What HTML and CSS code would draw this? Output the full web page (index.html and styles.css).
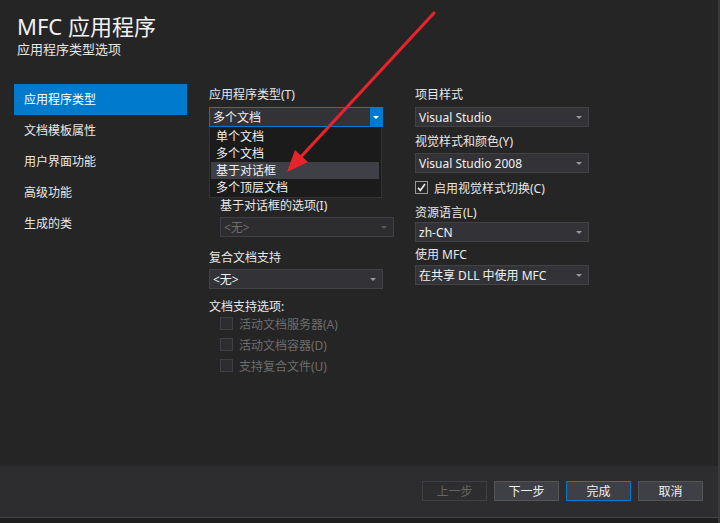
FILE: index.html
```html
<!DOCTYPE html>
<html>
  <head>
    <title>MFC 应用程序</title>
    <link rel="stylesheet" href="styles.css">
  </head>
  <body>
    <div class="dialog">
      <header>
        <h1>MFC 应用程序</h1>
        <div class="subtitle">应用程序类型选项</div>
      </header>

      <main>
        <nav>
          <div class="nav-item active">应用程序类型</div>
          <div class="nav-item">文档模板属性</div>
          <div class="nav-item">用户界面功能</div>
          <div class="nav-item">高级功能</div>
          <div class="nav-item">生成的类</div>
        </nav>

        <section class="col">
          <label>应用程序类型(T)</label>
          <div class="combo-wrap">
            <div class="combo focused">
              <span>多个文档</span>
              <span class="arrow-box"></span>
            </div>
            <!-- open list -->
            <ul class="dropdown">
              <li>单个文档</li>
              <li>多个文档</li>
              <li class="hover">基于对话框</li>
              <li>多个顶层文档</li>
            </ul>
          </div>

          <div class="indent group-dialog">
            <label>基于对话框的选项(I)</label>
            <div class="combo disabled tight"><span>&lt;无&gt;</span><span class="caret"></span></div>
          </div>

          <label class="gap">复合文档支持</label>
          <div class="combo tight"><span>&lt;无&gt;</span><span class="caret"></span></div>

          <label class="gap-md">文档支持选项:</label>
          <div class="checks">
            <div class="check disabled"><span class="box"></span>活动文档服务器(A)</div>
            <div class="check disabled"><span class="box"></span>活动文档容器(D)</div>
            <div class="check disabled"><span class="box"></span>支持复合文件(U)</div>
          </div>
        </section>

        <section class="col">
          <label>项目样式</label>
          <div class="combo"><span>Visual Studio</span><span class="caret"></span></div>

          <label class="gap-sm">视觉样式和颜色(Y)</label>
          <div class="combo tight"><span>Visual Studio 2008</span><span class="caret"></span></div>

          <div class="check toggle">
            <span class="box checked">
              <svg width="11" height="11" viewBox="0 0 11 11"><path d="M2 5.8 L4.3 8.4 L9 2" fill="none" stroke="#f1f1f1" stroke-width="1.6"/></svg>
            </span>启用视觉样式切换(C)
          </div>

          <label class="gap-sm">资源语言(L)</label>
          <div class="combo snug"><span>zh-CN</span><span class="caret"></span></div>

          <label class="gap-xs">使用 MFC</label>
          <div class="combo close"><span>在共享 DLL 中使用 MFC</span><span class="caret"></span></div>
        </section>
      </main>

      <footer>
        <button class="btn" disabled>上一步</button>
        <button class="btn">下一步</button>
        <button class="btn primary">完成</button>
        <button class="btn">取消</button>
      </footer>
      <div class="bottom-line"></div>
    </div>

    <svg class="annotation" width="720" height="523" viewBox="0 0 720 523">
      <line x1="434" y1="13" x2="298" y2="160" stroke="#e8232b" stroke-width="3.2" stroke-linecap="round"/>
      <polygon points="287,172 295,150 308,162" fill="#e8232b"/>
    </svg>
  </body>
</html>
```

FILE: styles.css
```css
body {
  margin: 0;
  width: 720px;
  height: 523px;
  overflow: hidden;
  background-color: #252526;
  color: #f1f1f1;
  font-family: "Segoe UI", "Noto Sans", "Noto Sans CJK SC", sans-serif;
  font-size: 12px;
  position: relative;
}

.dialog {
  height: 523px;
  display: flex;
  flex-direction: column;
  border-right: 2px solid #3a3a3d;
  box-sizing: border-box;
}

header {
  padding: 11px 0 0 17px;
  height: 73px;
  box-sizing: border-box;
}
header h1 {
  margin: 0;
  font-size: 22px;
  font-weight: normal;
  line-height: 30px;
}
.subtitle {
  font-size: 13px;
  line-height: 16px;
  color: #e6e6e6;
}

main {
  flex: 1;
  display: flex;
  padding-top: 11px;
}

nav {
  width: 173px;
  margin-left: 14px;
  margin-right: 22px;
}
.nav-item {
  height: 31px;
  line-height: 31px;
  padding-left: 10px;
  color: #e8e8e8;
}
.nav-item.active {
  background-color: #007acc;
  color: #ffffff;
}

.col {
  width: 174px;
  margin-right: 32px;
  display: flex;
  flex-direction: column;
  padding-top: 3px;
}

label {
  display: block;
  line-height: 16px;
  color: #e8e8e8;
}
label.gap {
  margin-top: 13px;
}
label.gap-md {
  margin-top: 10px;
}
label.gap-sm {
  margin-top: 7px;
}
label.gap-xs {
  margin-top: 5px;
}

.combo {
  margin-top: 4px;
  height: 20px;
  box-sizing: border-box;
  background-color: #333337;
  border: 1px solid #434346;
  display: flex;
  align-items: center;
  justify-content: space-between;
  padding-left: 3px;
  color: #f1f1f1;
}
.combo.tight {
  margin-top: 3px;
}
.combo.close {
  margin-top: 2px;
}
.combo.snug {
  margin-top: 1px;
}
.combo .caret {
  width: 0;
  height: 0;
  margin-right: 6px;
  border-left: 3px solid transparent;
  border-right: 3px solid transparent;
  border-top: 3px solid #999999;
}
.combo.disabled {
  color: #6d6d6d;
  background-color: #2d2d30;
  border-color: #3f3f46;
}
.combo.disabled .caret {
  border-top-color: #5a5a5a;
}

.combo-wrap {
  position: relative;
}
.combo.focused {
  border-color: #007acc;
  padding-right: 0;
}
.arrow-box {
  width: 12px;
  height: 18px;
  background-color: #007acc;
  position: relative;
}
.arrow-box::after {
  content: "";
  position: absolute;
  left: 3px;
  top: 8px;
  border-left: 3px solid transparent;
  border-right: 3px solid transparent;
  border-top: 3px solid #ffffff;
}

.dropdown {
  position: absolute;
  top: 24px;
  left: 0;
  width: 173px;
  margin: 0;
  padding: 1px 2px 1px 1px;
  box-sizing: border-box;
  list-style: none;
  background-color: #1b1b1c;
  border: 1px solid #333337;
  border-top: none;
  z-index: 2;
}
.dropdown li {
  height: 17px;
  line-height: 17px;
  padding-left: 5px;
  color: #f1f1f1;
}
.dropdown li.hover {
  background-color: #3f3f46;
}

.indent {
  margin-left: 11px;
  margin-right: -11px;
}
.group-dialog {
  margin-top: 71px;
}

.checks {
  margin-top: -2px;
  padding-left: 11px;
}
.check {
  display: flex;
  align-items: center;
  height: 21px;
  color: #e8e8e8;
}
.check.disabled {
  color: #6d6d6d;
}
.box {
  width: 13px;
  height: 13px;
  box-sizing: border-box;
  border: 1px solid #3f3f46;
  background-color: #2d2d30;
  margin-right: 6px;
  display: flex;
  align-items: center;
  justify-content: center;
}
.box.checked {
  border-color: #999999;
  background-color: #252526;
}
.toggle {
  margin-top: 4px;
  height: 21px;
}

footer {
  height: 51px;
  background-color: #2d2d30;
  display: flex;
  justify-content: flex-end;
  align-items: flex-start;
  gap: 7px;
  padding: 15px 15px 0 0;
  box-sizing: border-box;
}
.btn {
  width: 65px;
  height: 20px;
  box-sizing: border-box;
  background-color: #3f3f46;
  border: 1px solid #555555;
  color: #f1f1f1;
  font-family: "Segoe UI", "Noto Sans", "Noto Sans CJK SC", sans-serif;
  font-size: 12px;
  padding: 0;
}
.btn:disabled {
  background-color: #2d2d30;
  border-color: #3f3f46;
  color: #656565;
}
.btn.primary {
  border-color: #007acc;
}

.bottom-line {
  height: 5px;
  border-top: 1px solid #434346;
  background-color: #1e1e1e;
}

.annotation {
  position: absolute;
  top: 0;
  left: 0;
  z-index: 5;
  pointer-events: none;
}
```
